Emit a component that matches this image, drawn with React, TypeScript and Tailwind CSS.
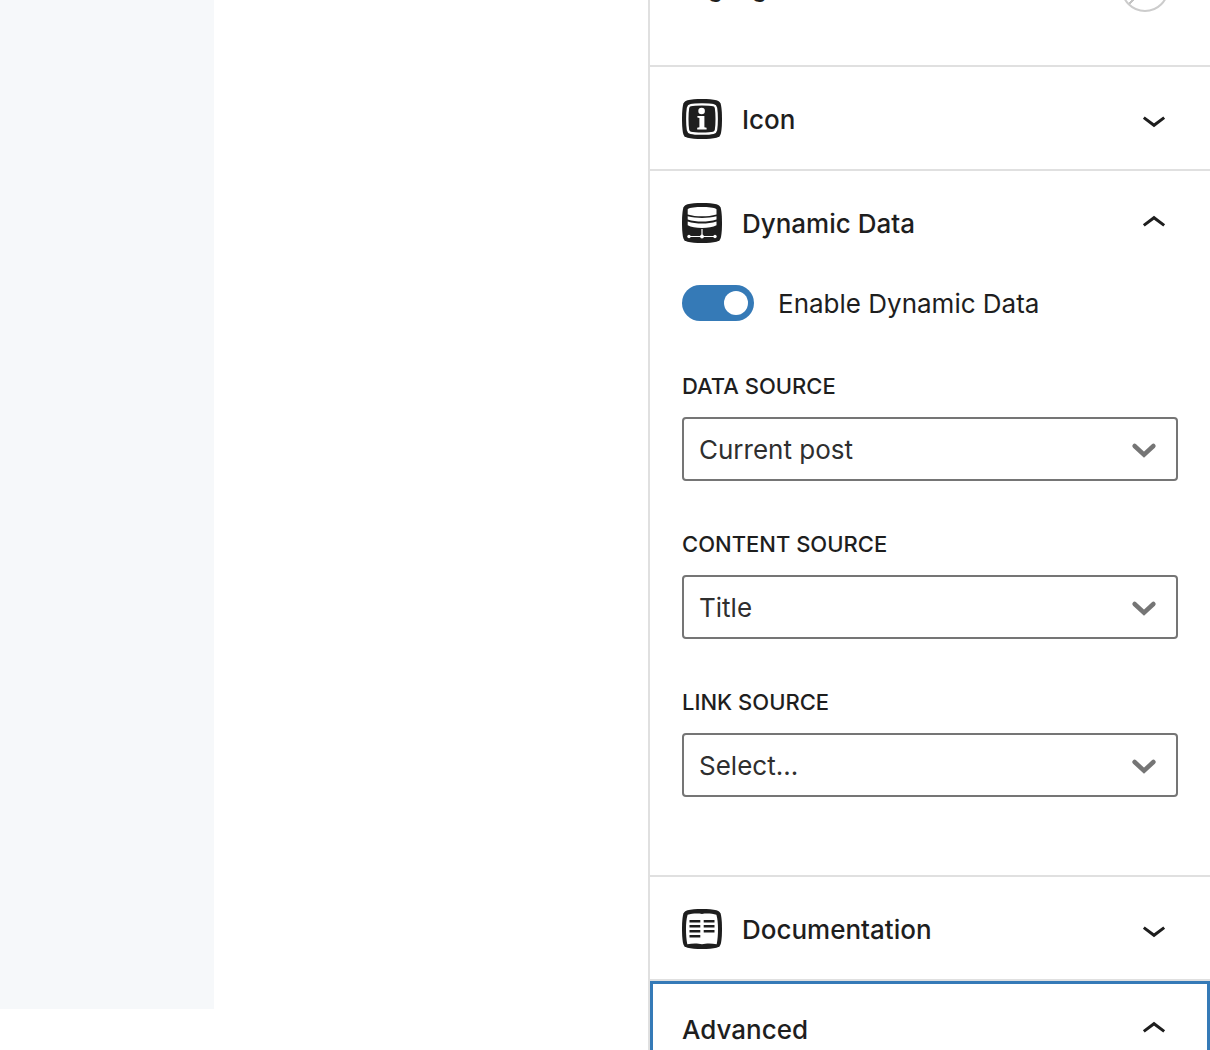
import { useId, useState } from "react";
import type { ReactNode } from "react";

function Chevron({ open }: { open: boolean }) {
  return (
    <svg viewBox="0 0 48 48" className="size-12 shrink-0" fill="none" stroke="#1e1e1e" strokeWidth="3" aria-hidden="true">
      <path d={open ? "M13.8 25.4 24 17.7 34.2 25.4" : "M13.8 21.6 24 29.3 34.2 21.6"} />
    </svg>
  );
}

const FRAME =
  "M20 0C26 0 31 .3 34.500 1.200 37.300 2 38.400 3.200 39 6 39.700 10 40 14 40 20S39.700 30 39 34C38.400 36.800 37.300 38 34.500 38.800 31 39.700 26 40 20 40S9 39.700 5.500 38.800C2.700 38 1.600 36.800 1 34 .3 30 0 26 0 20S.3 10 1 6C1.600 3.200 2.700 2 5.500 1.200 9 .3 14 0 20 0Z";

function InfoIcon() {
  return (
    <svg viewBox="0 0 40 40" className="size-10 shrink-0" fill="#1e1e1e" aria-hidden="true">
      <path d={FRAME} />
      <path
        d="M20 5.400C25 5.400 29 5.600 31.300 6.200 33.200 6.600 33.700 7.400 34 9 34.500 12 34.700 16 34.700 20S34.500 28 34 31C33.700 32.600 33.200 33.400 31.300 33.800 29 34.400 25 34.600 20 34.600S11 34.400 8.700 33.800C6.800 33.400 6.300 32.600 6 31 5.500 28 5.300 24 5.300 20S5.500 12 6 9C6.300 7.400 6.800 6.600 8.700 6.200 11 5.600 15 5.400 20 5.400Z"
        stroke="#fff"
        strokeWidth="2.400"
      />
      <circle cx="19.600" cy="12" r="3.300" fill="#fff" />
      <path d="M15.400 16.900H22.400V28.200L24.600 28.700V30.400H15.200V28.700L17.400 28.200V19L15.400 18.500Z" fill="#fff" />
    </svg>
  );
}

function DatabaseIcon() {
  return (
    <svg viewBox="0 0 40 40" className="size-10 shrink-0" fill="#1e1e1e" aria-hidden="true">
      <path d={FRAME} />
      <path
        d="M5.700 6.200C8 4.600 14 4.100 20 4.100S32 4.600 34.500 6.200V11.400C30 12.700 25 13.200 20 13.200S10 12.700 5.700 11.400ZM5.700 13.200C10 14.400 15 14.900 20 14.900S30 14.400 34.500 13.200V16.600C30 18 25 18.600 20 18.600S10 18 5.700 16.600ZM5.700 18.400C10 19.800 15 20.400 20 20.400S30 19.800 34.500 18.400V22.300C31 24.200 26 25 20 25S9 24.200 5.700 22.300Z"
        fill="#fff"
      />
      <path d="M20 26V33.500M7 33.500H33" stroke="#fff" strokeWidth="1.200" />
      <circle cx="7" cy="33.500" r="1.700" fill="#fff" />
      <circle cx="20" cy="33.500" r="1.900" fill="#fff" />
      <circle cx="33" cy="33.500" r="1.700" fill="#fff" />
    </svg>
  );
}

function BookIcon() {
  return (
    <svg viewBox="0 0 40 40" className="size-10 shrink-0" fill="#1e1e1e" aria-hidden="true">
      <path d={FRAME} />
      <path
        d="M5.600 5.800C10 4.300 16 4.100 20 4.900 24 4.100 30 4.300 34.400 5.800 35.600 10 36 15 36 20S35.600 31 34.700 35.300C30 34.200 24 34.300 20 35.200 16 34.300 10 34.200 5.300 35.300 4.400 31 4 25 4 20S4.400 10 5.600 5.800Z"
        fill="#fff"
      />
      <path
        d="M7.500 12.300H18.300M7.500 17.300H18.300M7.500 22.300H18.300M7.500 27.200H18.300M21.700 12.300H32.500M21.700 17.300H32.500M21.700 22.300H32.500"
        stroke="#1e1e1e"
        strokeWidth="2.400"
      />
    </svg>
  );
}

function Panel({
  title,
  icon,
  initialOpen = false,
  children,
}: {
  title: string;
  icon: ReactNode;
  initialOpen?: boolean;
  children?: ReactNode;
}) {
  const [open, setOpen] = useState(initialOpen);
  return (
    <section className="border-t-2 border-[#e0e0e0]">
      <h2>
        <button
          type="button"
          aria-expanded={open}
          onClick={() => setOpen(!open)}
          className="flex w-full items-center gap-5 px-8 pt-[30px] pb-[26px] text-left text-[26px] leading-[46px] font-medium"
        >
          <span className="flex pb-0.5">{icon}</span>
          <span className="grow">{title}</span>
          <span className="-my-2 flex">
            <Chevron open={open} />
          </span>
        </button>
      </h2>
      {open && children}
    </section>
  );
}

function SelectField({ label, options }: { label: string; options: string[] }) {
  const id = useId();
  return (
    <div className="flex flex-col gap-4">
      <label htmlFor={id} className="text-[22px] leading-[30px] font-medium uppercase">
        {label}
      </label>
      <div className="relative">
        <select
          id={id}
          className="h-16 w-full appearance-none rounded-sm border-2 border-[#757575] bg-white pr-16 pl-[15px] text-[26px] text-[#2f2f2f]"
        >
          {options.map((o) => (
            <option key={o}>{o}</option>
          ))}
        </select>
        <svg
          viewBox="0 0 40 40"
          className="pointer-events-none absolute top-3 right-[14px] size-10"
          fill="none"
          stroke="#757575"
          strokeWidth="4.500"
          strokeLinecap="round"
          aria-hidden="true"
        >
          <path d="M10.600 17 20 25.600 29.400 17" />
        </svg>
      </div>
    </div>
  );
}

export default function App() {
  const [enabled, setEnabled] = useState(true);
  return (
    <div className="flex h-screen overflow-hidden bg-white font-['Inter',sans-serif] text-[#1e1e1e]">
      <div className="mb-[41px] w-[214px] shrink-0 bg-[#f6f8fa]" />
      <main className="grow" />
      <aside className="flex w-[562px] shrink-0 flex-col border-l-2 border-[#e0e0e0]">
        <div className="flex h-[65px] shrink-0 items-start justify-between overflow-hidden pr-[41px] pl-8">
          <span className="-mt-[31px] text-[26px] leading-9">Highlight</span>
          <button
            type="button"
            aria-label="Highlight color"
            className="-mt-9 size-12 rounded-full border-2 border-[#cccccc] bg-[linear-gradient(-45deg,transparent_48%,#c4c4c4_48%,#c4c4c4_52%,transparent_52%)]"
          />
        </div>
        <Panel title="Icon" icon={<InfoIcon />} />
        <Panel title="Dynamic Data" icon={<DatabaseIcon />} initialOpen>
          <div className="flex flex-col gap-12 px-8 pt-2.5 pb-[78px]">
            <label className="flex items-center gap-6 text-[26px] leading-[38px]">
              <span className="relative flex h-9 w-[72px]">
                <input
                  type="checkbox"
                  role="switch"
                  checked={enabled}
                  onChange={() => setEnabled(!enabled)}
                  className="peer h-9 w-[72px] appearance-none rounded-full bg-[#949494] checked:bg-[#357ab7]"
                />
                <span className="pointer-events-none absolute top-1.5 left-1.5 size-6 rounded-full bg-white peer-checked:left-[42px]" />
              </span>
              <span className="pt-0.5">Enable Dynamic Data</span>
            </label>
            <SelectField label="Data Source" options={["Current post", "Select post"]} />
            <SelectField label="Content Source" options={["Title", "Excerpt"]} />
            <SelectField label="Link Source" options={["Select...", "Single post"]} />
          </div>
        </Panel>
        <Panel title="Documentation" icon={<BookIcon />} />
        <section className="border-t-2 border-[#e0e0e0]">
          <h2>
            <button
              type="button"
              aria-expanded={true}
              className="flex w-full items-center justify-between border-3 border-[#357ab7] px-[29px] py-[22px] text-left text-[26px] leading-[48px] font-medium"
            >
              Advanced
              <Chevron open />
            </button>
          </h2>
        </section>
      </aside>
    </div>
  );
}
